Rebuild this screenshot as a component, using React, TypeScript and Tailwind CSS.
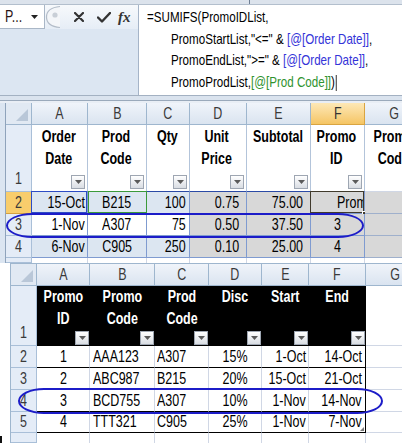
import React from 'react';

const SANS = "font-['Liberation_Sans',Arial,sans-serif]";

type Col = { w: string; l: string };

const C1: Col[] = [
  { w: 'w-[56px]', l: 'A' },
  { w: 'w-[59px]', l: 'B' },
  { w: 'w-[43px]', l: 'C' },
  { w: 'w-[57px]', l: 'D' },
  { w: 'w-[64px]', l: 'E' },
  { w: 'w-[54px]', l: 'F' },
  { w: 'w-[60px]', l: 'G' },
];

const C2: Col[] = [
  { w: 'w-[53px]', l: 'A' },
  { w: 'w-[65px]', l: 'B' },
  { w: 'w-[54px]', l: 'C' },
  { w: 'w-[53px]', l: 'D' },
  { w: 'w-[47px]', l: 'E' },
  { w: 'w-[57px]', l: 'F' },
  { w: 'w-[60px]', l: 'G' },
];

function N({ children, o }: { children: React.ReactNode; o: string }) {
  return <span className={`inline-block whitespace-nowrap scale-x-78 ${o}`}>{children}</span>;
}

function FilterBtn() {
  return (
    <div className="w-[14px] h-[14px] border border-[#9ea6b2] bg-linear-to-b from-[#ffffff] to-[#d9dde3] flex items-center justify-center">
      <svg width="7" height="4" viewBox="0 0 7 4">
        <path d="M0 0H7L3.5 4Z" fill="#5a5a5a" />
      </svg>
    </div>
  );
}

function Corner({ w }: { w: string }) {
  return (
    <div className={`${w} shrink-0 bg-[#e1e9f3] border-r border-b border-[#9eb6ce] flex items-end justify-end pr-[3px] pb-[3px]`}>
      <svg width="12" height="12" viewBox="0 0 12 12">
        <path d="M12 0V12H0Z" fill="#b9c7d8" />
      </svg>
    </div>
  );
}

function ColHeader({ cols, cornerW, sel, top }: { cols: Col[]; cornerW: string; sel: number; top?: boolean }) {
  return (
    <div className={`flex ${top ? 'h-[23px] border-t border-[#9eb6ce]' : 'h-[22px]'}`}>
      <Corner w={cornerW} />
      {cols.map((c, i) => (
        <div
          key={c.l}
          className={`${c.w} shrink-0 flex items-center justify-center border-r border-b text-[16px] ${
            i === sel
              ? 'bg-linear-to-b from-[#fde8b6] to-[#f5c563] border-[#d9a441] text-[#333]'
              : 'bg-linear-to-b from-[#f0f4fa] to-[#dae4f0] border-[#9eb6ce] text-[#3a3a3a]'
          }`}
        >
          <N o="origin-center">{c.l}</N>
        </div>
      ))}
    </div>
  );
}

function RowHead({ w, n, sel, end }: { w: string; n: string; sel?: boolean; end?: boolean }) {
  return (
    <div
      className={`${w} shrink-0 flex justify-center border-r border-b text-[16px] text-[#3a3a3a] ${end ? 'items-end' : 'items-center'} ${
        sel ? 'bg-[#f8cd6c] border-[#d5a040]' : 'bg-[#e4ecf7] border-[#a9bfd8]'
      }`}
    >
      <N o="origin-center">{n}</N>
    </div>
  );
}

const topHead: string[][] = [['Order', 'Date'], ['Prod', 'Code'], ['Qty'], ['Unit', 'Price'], ['Subtotal'], ['Promo', 'ID'], ['Promo', 'Code']];

const topAlign = [
  'justify-end pr-[2px]',
  'justify-center',
  'justify-end pr-[3px]',
  'justify-end pr-[7px]',
  'justify-end pr-[7px]',
  'justify-center',
  'justify-center',
];
const topOrigin = ['origin-right', 'origin-center', 'origin-right', 'origin-right', 'origin-right', 'origin-center', 'origin-center'];

const topRows = [
  { n: '2', sel: true, light: true, vals: ['15-Oct', 'B215', '100', '0.75', '75.00', 'Promo', ''] },
  { n: '3', sel: false, light: false, vals: ['1-Nov', 'A307', '75', '0.50', '37.50', '3', ''] },
  { n: '4', sel: false, light: true, vals: ['6-Nov', 'C905', '250', '0.10', '25.00', '4', ''] },
];

function TopSheet() {
  return (
    <div className="flex">
      <div className="w-[6px] shrink-0 bg-[#dbe5f1] border-r border-[#8fa3bb]" />
      <div className="flex flex-col">
        <ColHeader cols={C1} cornerW="w-[26px]" sel={5} />
        <div className="flex h-[67px]">
          <RowHead w="w-[26px]" n="1" end />
          {C1.map((c, i) => (
            <div
              key={c.l}
              className={`${c.w} shrink-0 flex flex-col items-center justify-between bg-white pt-[1px] pb-[2px] pr-[2px] border-r border-b ${
                i < 6 ? 'border-r-[#b3c4da] border-b-[#2b4aa5]' : 'border-r-[#d0d7e5] border-b-[#d0d7e5]'
              }`}
            >
              <div className="font-bold text-[16px] leading-[21.5px] text-center text-black whitespace-nowrap scale-x-78 origin-center">
                {topHead[i].map((t) => (
                  <div key={t}>{t}</div>
                ))}
              </div>
              {i < 6 && (
                <div className="self-end">
                  <FilterBtn />
                </div>
              )}
            </div>
          ))}
        </div>
        {topRows.map((r, ri) => (
          <div key={r.n} className="flex h-[22px]">
            <RowHead w="w-[26px]" n={r.n} sel={r.sel} />
            {C1.map((c, i) => {
              const bg = i < 3 ? (r.light ? 'bg-[#dce6f1]' : 'bg-white') : 'bg-[#d8d8d8]';
              const isProm = ri === 0 && i === 5;
              return (
                <div
                  key={c.l}
                  className={`${c.w} shrink-0 relative flex items-center border-r border-b text-[16px] text-black ${bg} ${
                    i < 6 ? 'border-[#7f9bd0]' : 'border-[#9fb0cc]'
                  } ${isProm ? 'justify-start' : topAlign[i]}`}
                >
                  {isProm ? (
                    <div className="w-full overflow-hidden whitespace-nowrap pl-[26px]">
                      <N o="origin-left">Promo ID</N>
                    </div>
                  ) : (
                    <N o={topOrigin[i]}>{r.vals[i]}</N>
                  )}
                  {ri === 0 && i === 0 && (
                    <div className="absolute -top-px -left-px right-0 bottom-0 border border-[#2d4cc4]" />
                  )}
                  {ri === 0 && i === 1 && (
                    <div className="absolute -top-px left-0 -right-px bottom-0 border border-r-[1.5px] border-[#3b9a3b]" />
                  )}
                  {isProm && (
                    <>
                      <div className="absolute -top-px -left-px right-0 bottom-0 border-[1.5px] border-[#403a2c]" />
                      <div className="absolute -bottom-[3px] -right-[3px] w-[5px] h-[5px] bg-[#403a2c] border border-white" />
                    </>
                  )}
                </div>
              );
            })}
          </div>
        ))}
        <div className="flex h-[5px]">
          <RowHead w="w-[26px]" n="" />
          {C1.map((c) => (
            <div key={c.l} className={`${c.w} shrink-0 bg-white border-r border-[#d0d7e5]`} />
          ))}
        </div>
      </div>
    </div>
  );
}

const botHead: string[][] = [['Promo', 'ID'], ['Promo', 'Code'], ['Prod', 'Code'], ['Disc'], ['Start'], ['End']];

const botAlign = [
  'justify-center',
  'justify-start pl-[3px]',
  'justify-start pl-[2px]',
  'justify-center',
  'justify-end pr-[2px]',
  'justify-end pr-[3px]',
];
const botOrigin = ['origin-center', 'origin-left', 'origin-left', 'origin-center', 'origin-right', 'origin-right'];

const botRows = [
  { n: '2', h: 'h-[22px]', vals: ['1', 'AAA123', 'A307', '15%', '1-Oct', '14-Oct'] },
  { n: '3', h: 'h-[22px]', vals: ['2', 'ABC987', 'B215', '20%', '15-Oct', '21-Oct'] },
  { n: '4', h: 'h-[22px]', vals: ['3', 'BCD755', 'A307', '10%', '1-Nov', '14-Nov'] },
  { n: '5', h: 'h-[21px]', vals: ['4', 'TTT321', 'C905', '25%', '1-Nov', '7-Nov'] },
];

function BottomSheet() {
  return (
    <div className="flex">
      <div className="w-[10px] shrink-0 bg-white flex flex-col justify-end">
        <div className="w-[2px] h-[7px] bg-[#111]" />
      </div>
      <div className="flex flex-col border-l border-[#9eb6ce]">
        <ColHeader cols={C2} cornerW="w-[26px]" sel={-1} top />
        <div className="flex h-[60px]">
          <RowHead w="w-[26px]" n="1" end />
          {C2.map((c, i) =>
            i < 6 ? (
              <div key={c.l} className={`${c.w} shrink-0 flex flex-col items-center justify-between bg-black pb-[1px] pr-[1px]`}>
                <div className="font-bold text-[16px] leading-[21.5px] text-center text-white whitespace-nowrap scale-x-78 origin-center">
                  {botHead[i].map((t) => (
                    <div key={t}>{t}</div>
                  ))}
                </div>
                <div className="self-end">
                  <FilterBtn />
                </div>
              </div>
            ) : (
              <div key={c.l} className={`${c.w} shrink-0 bg-white border-r border-b border-[#d0d7e5]`} />
            )
          )}
        </div>
        {botRows.map((r) => (
          <div key={r.n} className={`flex ${r.h}`}>
            <RowHead w="w-[26px]" n={r.n} />
            {C2.map((c, i) =>
              i < 6 ? (
                <div
                  key={c.l}
                  className={`${c.w} shrink-0 relative flex items-center bg-white border-r border-b border-b-black text-[16px] text-black ${
                    i === 5 ? 'border-r-black' : 'border-r-[#d0d7e5]'
                  } ${botAlign[i]}`}
                >
                  <N o={botOrigin[i]}>{r.vals[i]}</N>
                  {r.n === '5' && i === 5 && (
                    <svg className="absolute right-[1px] bottom-[1px]" width="4" height="4" viewBox="0 0 4 4">
                      <path d="M4 0V4H0Z" fill="#777" />
                    </svg>
                  )}
                </div>
              ) : (
                <div key={c.l} className={`${c.w} shrink-0 bg-white border-r border-b border-[#d0d7e5]`} />
              )
            )}
          </div>
        ))}
        <div className="flex h-[10px]">
          <RowHead w="w-[26px]" n="" />
          {C2.map((c) => (
            <div key={c.l} className={`${c.w} shrink-0 bg-white border-r border-[#d0d7e5]`} />
          ))}
        </div>
      </div>
    </div>
  );
}

function FormulaBar() {
  return (
    <div className="flex flex-col">
      <div className="h-[5px] flex bg-[#dce3ec] border-b border-[#b3bfcd]">
        <div className="w-[250px] border-r border-[#6f7f94]" />
      </div>
      <div className="flex h-[90px]">
        <div className="w-[138px] shrink-0 flex flex-col">
          <div className="h-[24px] flex items-center bg-linear-to-b from-[#f7f9fc] to-[#e6edf6]">
            <div className="w-[45px] h-full shrink-0 bg-white border-r border-b border-[#aab7c7] flex items-center pl-[5px] pr-[6px]">
              <N o="origin-left">
                <span className="text-[16px] text-[#2a1414]">P...</span>
              </N>
              <svg className="ml-auto" width="7" height="4" viewBox="0 0 7 4">
                <path d="M0 0H7L3.5 4Z" fill="#222" />
              </svg>
            </div>
            <svg width="17" height="24" viewBox="0 0 17 24" className="shrink-0">
              <path d="M15 1.5C4 2.5 1.5 8 1.5 12S4 21.5 15 22.5" fill="#f4f6f9" stroke="#b3bcc8" strokeWidth="1.2" />
              <circle cx="10" cy="10" r="2.6" fill="#c9cfd7" />
            </svg>
            <svg width="10" height="10" viewBox="0 0 10 10" className="ml-[12px] shrink-0">
              <path d="M1 1L9 9M9 1L1 9" stroke="#333" strokeWidth="2.2" strokeLinecap="round" />
            </svg>
            <svg width="14" height="11" viewBox="0 0 14 11" className="ml-[13px] shrink-0">
              <path d="M1 5.5L5 9.5L13 1" stroke="#333" strokeWidth="2.4" fill="none" strokeLinecap="round" strokeLinejoin="round" />
            </svg>
            <span className="ml-[7px] font-['Liberation_Serif',serif] italic font-bold text-[15px] text-[#333] leading-none">fx</span>
          </div>
          <div className="flex-1 bg-[#dce6f2]" />
        </div>
        <div className="flex-1 bg-white border-l border-[#a5b4c8] pl-[8px] pt-[2px] text-[14.5px] leading-[21.7px] text-black whitespace-nowrap overflow-hidden">
          <div className="origin-left scale-x-80">=SUMIFS(PromoIDList,</div>
          <div className="pl-[24px]">
            <div className="origin-left scale-x-80">
              PromoStartList,"&lt;=" &amp; <span className="text-[#3434d8]">[@[Order Date]]</span>,
            </div>
          </div>
          <div className="pl-[24px]">
            <div className="origin-left scale-x-80">
              PromoEndList,"&gt;=" &amp; <span className="text-[#3434d8]">[@[Order Date]]</span>,
            </div>
          </div>
          <div className="pl-[24px]">
            <div className="origin-left scale-x-80 flex items-center">
              <span>PromoProdList,</span>
              <span className="text-[#2f932f]">[@[Prod Code]]</span>
              <span>)</span>
              <span className="inline-block w-[1.3px] h-[16px] bg-black ml-[1px]" />
            </div>
          </div>
        </div>
      </div>
      <div className="h-[5px] bg-[#dae3ee] border-t border-[#a3b1c2]" />
      <div className="h-[3px] bg-[#e9eef5] border-t border-[#9aa9bb]" />
    </div>
  );
}

export default function App() {
  return (
    <div className={`relative w-[402px] h-[443px] overflow-hidden bg-white ${SANS}`}>
      <FormulaBar />
      <TopSheet />
      <BottomSheet />
      <div className="absolute left-[6px] top-[213px] w-[358px] h-[25px] border-[2.5px] border-[#1c1cc8] rounded-[26px_/_12.5px] pointer-events-none" />
      <div className="absolute left-[18px] top-[388px] w-[365px] h-[26px] border-[2.5px] border-[#1c1cc8] rounded-[26px_/_13px] pointer-events-none" />
    </div>
  );
}
